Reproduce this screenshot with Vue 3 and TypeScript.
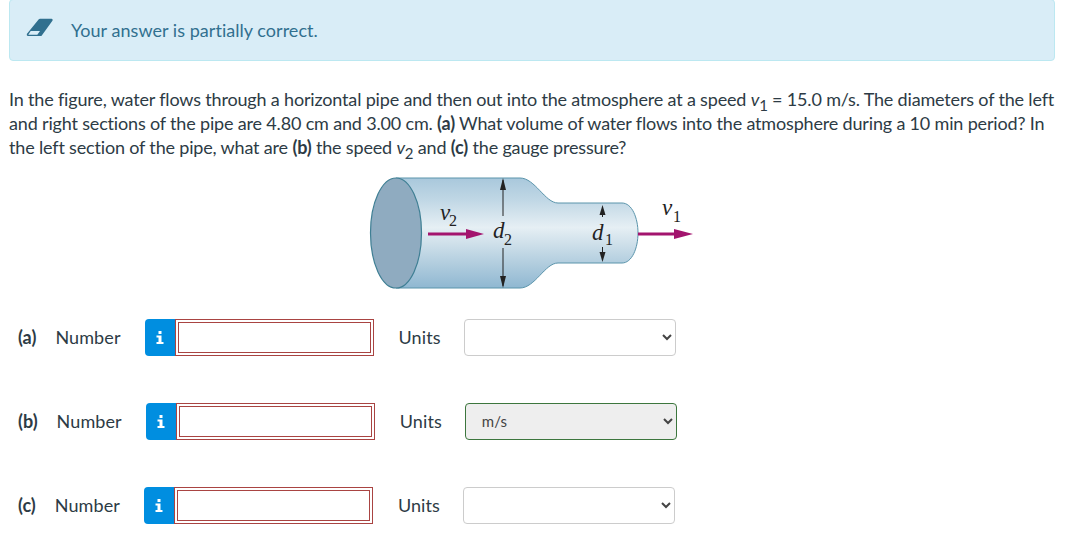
<script setup lang="ts">
interface Row { key: string; label: string; value: string; ok: boolean }
const rows: Row[] = [
  { key: 'a', label: '(a)', value: '', ok: false },
  { key: 'b', label: '(b)', value: 'm/s', ok: true },
  { key: 'c', label: '(c)', value: '', ok: false },
]
</script>

<template>
  <main class="page">
    <div class="alert">
      <svg class="eraser" width="28" height="20" viewBox="0 0 28 20" aria-hidden="true">
        <path
          fill-rule="evenodd"
          d="M12.8 1.2Q13.2.7 14 .7H25.6Q27 .7 26.6 2.6L15.8 17.4Q15.4 18 14.6 18H2Q.4 18 .8 16ZM4.7 13H14L11.3 16.7H2.3Z"
          fill="#31708f"
        />
      </svg>
      <span class="alert-text">Your answer is partially correct.</span>
    </div>

    <p class="question">
      In the figure, water flows through a horizontal pipe and then out into the atmosphere at a speed
      <i>v<sub>1</sub></i> = 15.0 m/s. The diameters of the left and right sections of the pipe are 4.80 cm and 3.00 cm.
      <b>(a)</b> What volume of water flows into the atmosphere during a 10 min period? In the left section of the pipe,
      what are <b>(b)</b> the speed <i>v<sub>2</sub></i> and <b>(c)</b> the gauge pressure?
    </p>

    <svg class="figure" width="340" height="125" viewBox="360 170 340 125" aria-label="Pipe diagram">
      <defs>
        <linearGradient id="pipe" x1="0" y1="0" x2="0" y2="1">
          <stop offset="0" stop-color="#a9c8dc" />
          <stop offset="0.2" stop-color="#c0d7e5" />
          <stop offset="0.45" stop-color="#e6eff4" />
          <stop offset="0.75" stop-color="#b6d0e0" />
          <stop offset="1" stop-color="#8fb7d1" />
        </linearGradient>
      </defs>
      <path
        d="M396 178H520C535 178 545 203 558 203H622C632 203 638 218 638 233C638 248 632 263 622 263H558C545 263 535 288 520 288H396Z"
        fill="url(#pipe)" stroke="#5a94ab" stroke-width="1"
      />
      <ellipse cx="396" cy="233" rx="25.5" ry="55" fill="#8fabc0" stroke="#3f7f94" stroke-width="1.2" />
      <path d="M428 234H470" stroke="#a3146e" stroke-width="3" />
      <path d="M466 229 484 234 466 239Z" fill="#a3146e" />
      <path d="M638 234H678" stroke="#a3146e" stroke-width="3" />
      <path d="M674 229 693 234 674 239Z" fill="#a3146e" />
      <g stroke="#222" stroke-width="1">
        <path d="M503 180V216M503 248V286" />
        <path d="M602.5 208V217M602.5 247V260" />
      </g>
      <g fill="#222">
        <path d="M503 178 506 190H500Z" />
        <path d="M503 288 500 276H506Z" />
        <path d="M602.5 205 605.5 215H599.5Z" />
        <path d="M602.5 262 599.5 252H605.5Z" />
      </g>
      <g class="math">
        <text x="440" y="220">v</text><text class="idx" x="449" y="226">2</text>
        <text x="493" y="238">d</text><text class="idx" x="504" y="245">2</text>
        <text x="592" y="240">d</text><text class="idx" x="605" y="245">1</text>
        <text x="662" y="215">v</text><text class="idx" x="673" y="222">1</text>
      </g>
    </svg>

    <form class="answers" @submit.prevent>
      <div v-for="row in rows" :key="row.key" class="row">
        <b class="part">{{ row.label }}</b>
        <span class="word">Number</span>
        <span class="info">
          <svg width="8" height="13" viewBox="0 0 8 13" aria-hidden="true">
            <path d="M2.5 0H5.5V3H2.5ZM.5 4.5H5.5V11H7.5V13H.5V11H2.5V6.5H.5Z" fill="#fff" />
          </svg>
        </span>
        <input class="num" type="text" :aria-label="row.label + ' number'" />
        <span class="word units">Units</span>
        <select class="unit" :class="{ ok: row.ok }" :aria-label="row.label + ' units'">
          <option>{{ row.value }}</option>
        </select>
      </div>
    </form>
  </main>
</template>

<style scoped>
.page {
  width: 1070px;
  height: 558px;
  overflow: hidden;
  font-family: Lato, "Liberation Sans", sans-serif;
  font-size: 18px;
  line-height: 24px;
  color: #2d3b45;
}
.alert {
  box-sizing: border-box;
  width: 1046px;
  height: 62px;
  margin: -1px 0 0 9px;
  display: flex;
  align-items: center;
  gap: 17px;
  padding-left: 16px;
  background: #d9edf7;
  border: 1px solid #bce8f1;
  border-radius: 4px;
  color: #31708f;
}
.alert-text { letter-spacing: 0.04px; }
.eraser { flex: none; margin-bottom: 4px; }
.question {
  width: 1050px;
  margin: 26px 0 0 9px;
  letter-spacing: -0.17px;
}
i sub {
  font-size: 15px;
  line-height: 0;
  font-style: normal;
}
.figure {
  display: block;
  margin: 11px 0 0 360px;
}
.math text {
  font-family: "Liberation Serif", serif;
  font-style: italic;
  font-size: 23px;
  fill: #222;
}
.math .idx {
  font-style: normal;
  font-size: 16px;
}
.answers {
  display: flex;
  flex-direction: column;
  gap: 48px;
  margin-top: 24px;
}
.row {
  display: flex;
  align-items: center;
  height: 36px;
  padding-left: 18px;
}
.part { font-weight: 700; margin-right: 19px; }
.word { color: #2d3b45; letter-spacing: 0.1px; }
.info {
  box-sizing: border-box;
  width: 30px;
  height: 37px;
  margin-left: 24px;
  display: flex;
  align-items: center;
  justify-content: center;
  background: #008ee0;
  border-radius: 4px 0 0 4px;
}
.num {
  box-sizing: border-box;
  width: 199px;
  height: 37px;
  padding: 0;
  border: 4px double #a94442;
  background: #fff;
  outline: none;
}
.units { margin-left: 25px; }
.unit {
  box-sizing: border-box;
  width: 212px;
  height: 37px;
  margin-left: 23px;
  padding: 0 12px;
  font-family: Lato, "Liberation Sans", sans-serif;
  font-size: 15px;
  color: #444;
  background-color: #fff;
  border: 1px solid #ccc;
  border-radius: 4px;
}
.unit.ok {
  background-color: #eee;
  border-color: #3c763d;
}
</style>
